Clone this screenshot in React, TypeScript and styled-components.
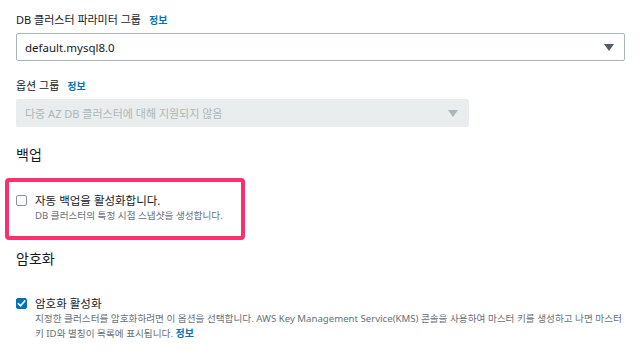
import React from "react";
import styled, { createGlobalStyle } from "styled-components";

const Global = createGlobalStyle`
  html, body { margin: 0; padding: 0; background: #ffffff; }
  body { font-family: "Noto Sans", "Noto Sans CJK KR", sans-serif; color: #16191f; }
  * { box-sizing: border-box; }
`;

const Page = styled.div`
  width: 640px;
  height: 356px;
  overflow: hidden;
  padding: 12px 15px 0 16px;
  display: flex;
  flex-direction: column;
`;

const Field = styled.div<{ $mb: number }>`
  display: flex;
  flex-direction: column;
  margin-bottom: ${(p) => p.$mb}px;
`;

const Label = styled.div`
  font-size: 11px;
  line-height: 16px;
  height: 16px;
  color: #16191f;
  display: flex;
  align-items: center;
  gap: 8px;
  margin-bottom: 5px;
`;

const Info = styled.a`
  font-size: 10px;
  font-weight: 700;
  color: #0073bb;
  text-decoration: none;
`;

const Select = styled.div<{ $disabled?: boolean; $width: string }>`
  width: ${(p) => p.$width};
  height: 28px;
  display: flex;
  align-items: center;
  justify-content: space-between;
  padding: 0 10px 0 8px;
  border: 1px solid ${(p) => (p.$disabled ? "#eaeded" : "#aab7b8")};
  border-radius: 2px;
  background: ${(p) => (p.$disabled ? "#eaeded" : "#ffffff")};
  color: ${(p) => (p.$disabled ? "#aab7b8" : "#16191f")};
  font-size: ${(p) => (p.$disabled ? "11px" : "11.5px")};
`;

const Caret = styled.span<{ $disabled?: boolean }>`
  width: 0;
  height: 0;
  border-left: 5px solid transparent;
  border-right: 5px solid transparent;
  border-top: 7px solid ${(p) => (p.$disabled ? "#aab7b8" : "#545b64")};
`;

const Heading = styled.h2<{ $mb: number }>`
  margin: 0 0 ${(p) => p.$mb}px 0;
  font-size: 14px;
  font-weight: 400;
  line-height: 20px;
  color: #16191f;
`;

const Highlight = styled.div`
  margin-left: -11px;
  width: 240px;
  height: 62px;
  border: 4px solid #fd2f6e;
  border-radius: 4px;
  padding: 11px 0 0 7px;
  margin-bottom: 9px;
`;

const CheckRow = styled.div`
  display: flex;
  align-items: flex-start;
  gap: 8px;
`;

const Box = styled.span<{ $checked?: boolean }>`
  flex: none;
  width: 11px;
  height: 11px;
  margin-top: 2px;
  border-radius: 2px;
  border: 1px solid ${(p) => (p.$checked ? "#0073bb" : "#879596")};
  background: ${(p) => (p.$checked ? "#0073bb" : "#ffffff")};
  display: flex;
  align-items: center;
  justify-content: center;
`;

const CheckText = styled.div`
  display: flex;
  flex-direction: column;
`;

const CheckTitle = styled.div`
  font-size: 11.5px;
  line-height: 15px;
  color: #16191f;
`;

const Desc = styled.div`
  font-size: 9.65px;
  line-height: 14px;
  color: #687078;
  margin-top: 1px;
`;

const EncWrap = styled.div`
  margin-top: 27px;
`;

export default function App() {
  return (
    <>
      <Global />
      <Page>
        <Field $mb={17}>
          <Label>
            DB 클러스터 파라미터 그룹 <Info>정보</Info>
          </Label>
          <Select $width="609px">
            <span>default.mysql8.0</span>
            <Caret />
          </Select>
        </Field>
        <Field $mb={18}>
          <Label>
            옵션 그룹 <Info>정보</Info>
          </Label>
          <Select $disabled $width="453px">
            <span>다중 AZ DB 클러스터에 대해 지원되지 않음</span>
            <Caret $disabled />
          </Select>
        </Field>
        <Heading $mb={13}>백업</Heading>
        <Highlight>
          <CheckRow>
            <Box />
            <CheckText>
              <CheckTitle>자동 백업을 활성화합니다.</CheckTitle>
              <Desc>DB 클러스터의 특정 시점 스냅샷을 생성합니다.</Desc>
            </CheckText>
          </CheckRow>
        </Highlight>
        <Heading $mb={0}>암호화</Heading>
        <EncWrap>
          <CheckRow>
            <Box $checked>
              <svg width="9" height="9" viewBox="0 0 10 10">
                <path d="M1.5 5.2 L4 7.6 L8.6 2.2" fill="none" stroke="#fff" strokeWidth="1.8" strokeLinecap="round" strokeLinejoin="round" />
              </svg>
            </Box>
            <CheckText>
              <CheckTitle>암호화 활성화</CheckTitle>
              <Desc>
                지정한 클러스터를 암호화하려면 이 옵션을 선택합니다. AWS Key Management Service(KMS) 콘솔을 사용하여 마스터 키를 생성하고 나면 마스터
                <br />키 ID와 별칭이 목록에 표시됩니다. <Info>정보</Info>
              </Desc>
            </CheckText>
          </CheckRow>
        </EncWrap>
      </Page>
    </>
  );
}
